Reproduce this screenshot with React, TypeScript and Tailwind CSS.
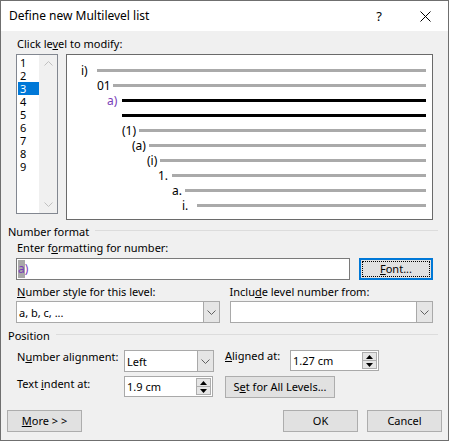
import React from "react";

const rows = [
  { label: "i)", lx: 81, ls: 97 },
  { label: "01", lx: 97, ls: 113 },
  { label: "a)", lx: 107, ls: 122, purple: true, black: true },
  { label: "", lx: 122, ls: 122, black: true },
  { label: "(1)", lx: 122, ls: 139 },
  { label: "(a)", lx: 132, ls: 149 },
  { label: "(i)", lx: 147, ls: 160 },
  { label: "1.", lx: 158, ls: 172 },
  { label: "a.", lx: 172, ls: 185 },
  { label: "i.", lx: 182, ls: 197 },
];

function Chevron({ color = "#606060" }: { color?: string }) {
  return (
    <svg width="9" height="5" viewBox="0 0 9 5">
      <path d="M0.5 0.5 L4.5 4.5 L8.5 0.5" fill="none" stroke={color} strokeWidth="1" />
    </svg>
  );
}

function ChevronUp({ color = "#c0c0c0" }: { color?: string }) {
  return (
    <svg width="9" height="5" viewBox="0 0 9 5">
      <path d="M0.5 4.5 L4.5 0.5 L8.5 4.5" fill="none" stroke={color} strokeWidth="1" />
    </svg>
  );
}

function Select({ value, w }: { value?: string; w: string }) {
  return (
    <div className={`flex h-[22px] ${w} border border-[#a9a9a9] bg-white`}>
      <div className="flex-1 pl-[2px] pt-[1px] leading-[20px] text-black">{value}</div>
      <div className="flex w-[16px] items-center justify-center border-l border-[#a9a9a9] bg-[#e5e5e5]">
        <Chevron />
      </div>
    </div>
  );
}

function Spin({ value, w, h }: { value: string; w: string; h: string }) {
  return (
    <div className={`flex ${h} ${w} border border-[#a9a9a9] bg-white`}>
      <div className="flex-1 pl-[2px] leading-[19px]">{value}</div>
      <div className="my-[1px] mr-[1px] flex w-[15px] flex-col">
        <div className="flex flex-1 items-center justify-center border border-[#adadad] bg-[#e5e5e5]">
          <svg width="7" height="4" viewBox="0 0 7 4">
            <path d="M0 4 L3.5 0 L7 4 Z" fill="#000" />
          </svg>
        </div>
        <div className="flex flex-1 items-center justify-center border border-t-0 border-[#adadad] bg-[#e5e5e5]">
          <svg width="7" height="4" viewBox="0 0 7 4">
            <path d="M0 0 L3.5 4 L7 0 Z" fill="#000" />
          </svg>
        </div>
      </div>
    </div>
  );
}

function Button({ children, w }: { children: React.ReactNode; w: string }) {
  return (
    <div className={`flex h-[22px] ${w} items-center justify-center border border-[#adadad] bg-[#e1e1e1] leading-[16px]`}>
      {children}
    </div>
  );
}

function GroupLabel({ text }: { text: string }) {
  return (
    <div className="flex h-[16px] items-start leading-[16px]">
      <span>{text}</span>
      <div className="mr-[4px] ml-[6px] mt-[6px] h-[1px] flex-1 bg-[#dcdcdc]" />
    </div>
  );
}

export default function App() {
  return (
    <div className="h-[441px] w-[449px] overflow-hidden border border-[#6f6f6f] bg-[#f0f0f0] font-['Noto_Sans',sans-serif] text-[11px] text-black">
      {/* Title bar */}
      <div className="flex h-[30px] items-center bg-white pl-[8px]">
        <span className="text-[12px] leading-[16px]">Define new Multilevel list</span>
        <span className="ml-auto mr-[38px] text-[13px] leading-[16px]">?</span>
        <svg width="11" height="11" viewBox="0 0 11 11" className="mr-[17px]">
          <path d="M0.5 0.5 L10.5 10.5 M10.5 0.5 L0.5 10.5" stroke="#000" strokeWidth="1" />
        </svg>
      </div>

      <div className="flex flex-col px-[6px]">
        <div className="mt-[5px] pl-[10px] leading-[16px]">
          Click le<u>v</u>el to modify:
        </div>

        <div className="mt-[2px] flex items-start px-[9px]">
          {/* Level list */}
          <div className="flex h-[160px] w-[42px] border border-[#828790] bg-white">
            <div className="w-[22px] pl-[1px] pt-[1px]">
              {["1", "2", "3", "4", "5", "6", "7", "8", "9"].map((n) => (
                <div
                  key={n}
                  className={
                    n === "3"
                      ? "flex h-[13px] items-center overflow-hidden bg-[#0078d7] pl-[2px] text-white"
                      : "flex h-[13px] items-center overflow-hidden pl-[2px]"
                  }
                >
                  <span className="leading-[12px]">{n}</span>
                </div>
              ))}
            </div>
            <div className="flex flex-1 flex-col items-center justify-between bg-[#f0f0f0] pb-[6px] pt-[6px]">
              <ChevronUp />
              <Chevron color="#c0c0c0" />
            </div>
          </div>

          {/* Preview */}
          <div className="ml-[8px] h-[166px] flex-1 border border-[#6a6a6a] bg-white pr-[6px] pt-[8px]">
            {rows.map((r, i) => (
              <div key={i} className="flex h-[15px] items-center" style={{ paddingLeft: r.lx - 67 }}>
                <span
                  className={r.purple ? "text-[12px] leading-[15px] text-[#7a3db8]" : "text-[12px] leading-[15px]"}
                  style={{ width: r.ls - r.lx }}
                >
                  {r.label}
                </span>
                <div className={r.black ? "h-[3px] flex-1 bg-black" : "h-[3px] flex-1 bg-[#aaaaaa]"} />
              </div>
            ))}
          </div>
        </div>

        {/* Number format */}
        <div className="mt-[4px] pl-[1px]">
          <GroupLabel text="Number format" />
        </div>
        <div className="px-[9px]">
          <div className="pl-[1px] leading-[16px]">
            Enter f<u>o</u>rmatting for number:
          </div>
          <div className="mt-[2px] flex items-start">
            <div className="flex h-[22px] w-[334px] items-center border border-[#7a7a7a] bg-white pl-[1px]">
              <span className="bg-[#a8a8a8] text-[12px] leading-[18px] text-[#7a3db8]">a</span>
              <span className="text-[12px] leading-[18px] text-[#7a3db8]">)</span>
            </div>
            <div className="ml-[9px] flex h-[22px] flex-1 border-2 border-[#0078d7] bg-[#e1e1e1] p-[1px]">
              <div className="flex flex-1 items-center justify-center border border-dotted border-black leading-[14px]">
                <span>
                  <u>F</u>ont...
                </span>
              </div>
            </div>
          </div>

          <div className="mt-[4px] grid grid-cols-2 gap-x-[10px]">
            <div className="pl-[1px] leading-[16px]">
              <u>N</u>umber style for this level:
            </div>
            <div className="leading-[16px]">
              Inclu<u>d</u>e level number from:
            </div>
            <div className="mt-[1px]">
              <Select value="a, b, c, ..." w="w-full" />
            </div>
            <div className="mt-[1px]">
              <Select w="w-full" />
            </div>
          </div>
        </div>

        {/* Position */}
        <div className="mt-[5px] pl-[1px]">
          <GroupLabel text="Position" />
        </div>
        <div className="px-[9px]">
          <div className="mt-[6px] flex items-start">
            <div className="-mt-[1px] w-[108px] pl-[1px] leading-[16px]">
              N<u>u</u>mber alignment:
            </div>
            <Select value="Left" w="w-[90px]" />
            <div className="-mt-[2px] ml-[11px] w-[65px] leading-[16px]">
              <u>A</u>ligned at:
            </div>
            <Spin value="1.27 cm" w="w-[89px]" h="h-[21px]" />
          </div>
          <div className="mt-[4px] flex items-start">
            <div className="w-[108px] pl-[1px] leading-[16px]">
              Text <u>i</u>ndent at:
            </div>
            <Spin value="1.9 cm" w="w-[89px]" h="h-[21px]" />
            <div className="ml-[12px]">
              <Button w="w-[110px]">
                <span>
                  S<u>e</u>t for All Levels...
                </span>
              </Button>
            </div>
          </div>
        </div>

        {/* Bottom buttons */}
        <div className="mt-[12px] flex items-start">
          <Button w="w-[75px]">
            <span>
              <u>M</u>ore &gt; &gt;
            </span>
          </Button>
          <div className="ml-auto">
            <Button w="w-[75px]">OK</Button>
          </div>
          <div className="ml-[9px]">
            <Button w="w-[75px]">Cancel</Button>
          </div>
        </div>
      </div>
    </div>
  );
}
